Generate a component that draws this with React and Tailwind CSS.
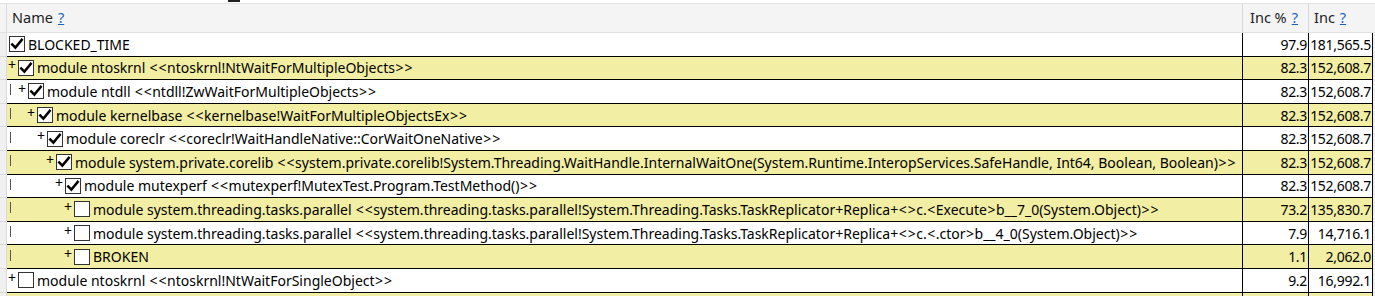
import React from "react";

const font={fontFamily:'"Segoe UI","Noto Sans","Open Sans",sans-serif'};

const rows=[
  {pad:"w-[2px]",plus:false,bar:false,chk:true,text:"BLOCKED_TIME",pct:"97.9",inc:"181,565.5"},
  {pad:"w-[1px]",plus:true,bar:false,chk:true,text:"module ntoskrnl <<ntoskrnl!NtWaitForMultipleObjects>>",pct:"82.3",inc:"152,608.7"},
  {pad:"w-[11px]",plus:true,bar:true,chk:true,text:"module ntdll <<ntdll!ZwWaitForMultipleObjects>>",pct:"82.3",inc:"152,608.7"},
  {pad:"w-[20px]",plus:true,bar:true,chk:true,text:"module kernelbase <<kernelbase!WaitForMultipleObjectsEx>>",pct:"82.3",inc:"152,608.7"},
  {pad:"w-[30px]",plus:true,bar:true,chk:true,text:"module coreclr <<coreclr!WaitHandleNative::CorWaitOneNative>>",pct:"82.3",inc:"152,608.7"},
  {pad:"w-[39px]",plus:true,bar:true,chk:true,text:"module system.private.corelib <<system.private.corelib!System.Threading.WaitHandle.InternalWaitOne(System.Runtime.InteropServices.SafeHandle, Int64, Boolean, Boolean)>>",pct:"82.3",inc:"152,608.7"},
  {pad:"w-[48px]",plus:true,bar:true,chk:true,text:"module mutexperf <<mutexperf!MutexTest.Program.TestMethod()>>",pct:"82.3",inc:"152,608.7"},
  {pad:"w-[57px]",plus:true,bar:true,chk:false,text:"module system.threading.tasks.parallel <<system.threading.tasks.parallel!System.Threading.Tasks.TaskReplicator+Replica+<>c.<Execute>b__7_0(System.Object)>>",pct:"73.2",inc:"135,830.7"},
  {pad:"w-[57px]",plus:true,bar:true,chk:false,text:"module system.threading.tasks.parallel <<system.threading.tasks.parallel!System.Threading.Tasks.TaskReplicator+Replica+<>c.<.ctor>b__4_0(System.Object)>>",pct:"7.9",inc:"14,716.1"},
  {pad:"w-[57px]",plus:true,bar:true,chk:false,text:"BROKEN",pct:"1.1",inc:"2,062.0"},
  {pad:"w-[1px]",plus:true,bar:false,chk:false,text:"module ntoskrnl <<ntoskrnl!NtWaitForSingleObject>>",pct:"9.2",inc:"16,992.1"},
  {pad:"w-[1px]",plus:false,bar:false,chk:null,text:"",pct:"",inc:""},
];

// "<" in the original font has wide side bearings, so space the brackets out a bit
const Name=({text})=>{
  const parts=text.split(/([<>])/);
  return(
    <span className="ml-[3px]">
      {parts.map((p,i)=>(p==="<"||p===">")?<span key={i} className="mx-[0.5px]">{p}</span>:p)}
    </span>
  );
};

const Help=()=>(<span className="ml-[5px] text-[#1565c0] underline">?</span>);

const Checkbox=({checked})=>(
  <div className="w-[16px] h-[16px] shrink-0 border border-[#333] bg-white flex items-center justify-center">
    {checked&&(
      <svg width="14" height="14" viewBox="0 0 14 14">
        <path d="M2.2 7.4 L5.4 10.6 L11.8 2.8" fill="none" stroke="#000" strokeWidth="2.4" strokeLinecap="square"/>
      </svg>
    )}
  </div>
);

const Row=({r,i})=>{
  const bg=i%2===1?"bg-[#f2eea4]":"bg-white";
  return(
    <div className="flex h-[23.6px]">
      <div className="w-[7px] shrink-0 bg-[#f0f0f0] border-r border-b border-[#dadada]"/>
      <div className={`w-[1236px] shrink-0 flex items-center border-r border-b border-black overflow-hidden whitespace-nowrap ${bg}`}>
        <div className={`${r.pad} shrink-0 h-full flex items-center`}>
          {r.bar&&<div className="ml-[3px] mb-[3px] w-px h-[11px] bg-[#555]"/>}
        </div>
        {r.plus&&<span className="w-[10px] shrink-0 text-[14px] leading-none mb-[5px]">+</span>}
        {r.chk!==null&&<Checkbox checked={r.chk}/>}
        <Name text={r.text}/>
      </div>
      <div className={`w-[66px] shrink-0 flex items-center justify-end pr-[1px] tracking-[-0.3px] border-r border-b border-black ${bg}`}>{r.pct}</div>
      <div className={`w-[64px] shrink-0 flex items-center justify-end pr-[1px] tracking-[-0.3px] border-r border-b border-black ${bg}`}>{r.inc}</div>
      <div className="w-[2px] shrink-0 bg-[#f0f0f0]"/>
    </div>
  );
};

export default function App(){
  return(
    <div className="w-[1375px] h-[296px] overflow-hidden bg-white text-[14px] text-black" style={font}>
      <div className="h-[3px] flex">
        <div className="ml-[228px] w-[12px] h-[2px] bg-[#222]"/>
      </div>
      <div className="flex h-[30px] bg-[#f4f4f4] border-t border-[#e2e2e2] border-b border-[#cfcfcf] text-[#1e1e1e] text-[14.5px]">
        <div className="w-[7px] shrink-0 border-r border-[#dadada]"/>
        <div className="w-[1236px] shrink-0 flex items-center pl-[5px] border-r border-[#d6d6d6]">Name<Help/></div>
        <div className="w-[66px] shrink-0 flex items-center pl-[7px] border-r border-[#d6d6d6]">Inc %<Help/></div>
        <div className="w-[66px] shrink-0 flex items-center pl-[5px]">Inc<Help/></div>
      </div>
      {rows.map((r,i)=><Row key={i} r={r} i={i}/>)}
    </div>
  );
}
